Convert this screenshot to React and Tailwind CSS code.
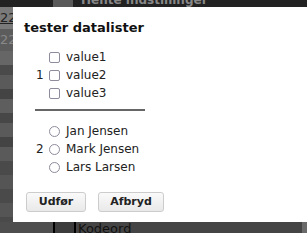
import React from 'react';

const checks = ['value1', 'value2', 'value3'];
const people = ['Jan Jensen', 'Mark Jensen', 'Lars Larsen'];

function Box({ round }) {
  return (
    <span
      className={`inline-block w-[11px] h-[11px] border-[1.5px] border-[#8f8a9c] bg-white ${
        round ? 'rounded-full' : 'rounded-[2px]'
      }`}
    />
  );
}

function Row({ label, num, round }) {
  return (
    <div className="flex items-center h-[18px]">
      <span className="w-[13px] text-[12px]">{num}</span>
      <Box round={round} />
      <span className="ml-[6px] text-[12px]">{label}</span>
    </div>
  );
}

export default function App() {
  return (
    <div
      className="relative w-[307px] h-[233px] overflow-hidden bg-[#3a3a3a]"
      style={{ fontFamily: '"DejaVu Sans", Verdana, sans-serif' }}
    >
      {/* page behind the dialog */}
      <div className="flex h-[7px] bg-[#222]">
        <div className="w-[53px]" />
        <div className="w-[20px] bg-[#5a5a5a]" />
        <div className="ml-[8px] text-[12px] font-bold text-[#888] leading-[7px] -mt-[3px]">
          Hente indstillinger
        </div>
      </div>
      <div className="flex flex-col w-[13px]">
        <div className="h-[22px] bg-[#7a7a7a] text-[13px] text-[#222] underline leading-[22px]">22</div>
        <div className="h-[22px] bg-[#5c5c5c] text-[13px] text-[#888] leading-[22px]">22</div>
        <div className="h-[14px] bg-[#666]" />
        <div className="h-[10px] bg-[#4a4a4a]" />
        <div className="h-[14px] bg-[#5a5a5a]" />
        <div className="h-[10px] bg-[#444]" />
        <div className="h-[14px] bg-[#5e5e5e]" />
        <div className="h-[10px] bg-[#474747]" />
        <div className="h-[14px] bg-[#5a5a5a]" />
        <div className="h-[10px] bg-[#444]" />
        <div className="h-[14px] bg-[#5a5a5a]" />
        <div className="h-[14px] bg-[#4a4a4a]" />
        <div className="h-[14px] bg-[#555]" />
        <div className="h-[14px] bg-[#4a4a4a]" />
        <div className="h-[14px] bg-[#555]" />
        <div className="h-[20px] bg-[#4a4a4a]" />
      </div>
      <div className="absolute left-0 right-0 top-[222px] h-[11px] flex bg-[#444]">
        <div className="w-[53px] bg-[#4e4e4e]" />
        <div className="w-[2px] bg-black" />
        <div className="w-[19px] bg-[#3c3c3c]" />
        <div className="w-[2px] bg-black" />
        <div className="ml-[2px] text-[13px] leading-[11px] pt-[1px] text-[#111]">Kodeord</div>
        <div className="flex-1" />
        <div className="w-[5px] bg-[#6a6a6a]" />
      </div>

      {/* dialog */}
      <div className="absolute left-[13px] top-[7px] w-[300px] h-[215px] bg-white text-[#222] pl-[11px] pt-[12px]">
        <h2 className="text-[13px] font-bold text-[#111] leading-[18px]">tester datalister</h2>
        <div className="mt-[11px] pl-[12px]">
          {checks.map((c, i) => (
            <Row key={c} label={c} num={i === 1 ? '1' : ''} />
          ))}
        </div>
        <div className="ml-[11px] mt-[7px] w-[110px] h-[2px] bg-[#666]" />
        <div className="mt-[11px] pl-[12px]">
          {people.map((p, i) => (
            <Row key={p} label={p} num={i === 1 ? '2' : ''} round />
          ))}
        </div>
        <div className="flex gap-[12px] mt-[16px] pl-[2px]">
          <button className="w-[60px] h-[20px] rounded-[3px] border border-[#ccc] bg-gradient-to-b from-[#fafafa] to-[#e9e9e9] text-[11px] font-bold text-[#222]">
            Udfør
          </button>
          <button className="w-[66px] h-[20px] rounded-[3px] border border-[#ccc] bg-gradient-to-b from-[#fafafa] to-[#e9e9e9] text-[11px] font-bold text-[#222]">
            Afbryd
          </button>
        </div>
      </div>
    </div>
  );
}
